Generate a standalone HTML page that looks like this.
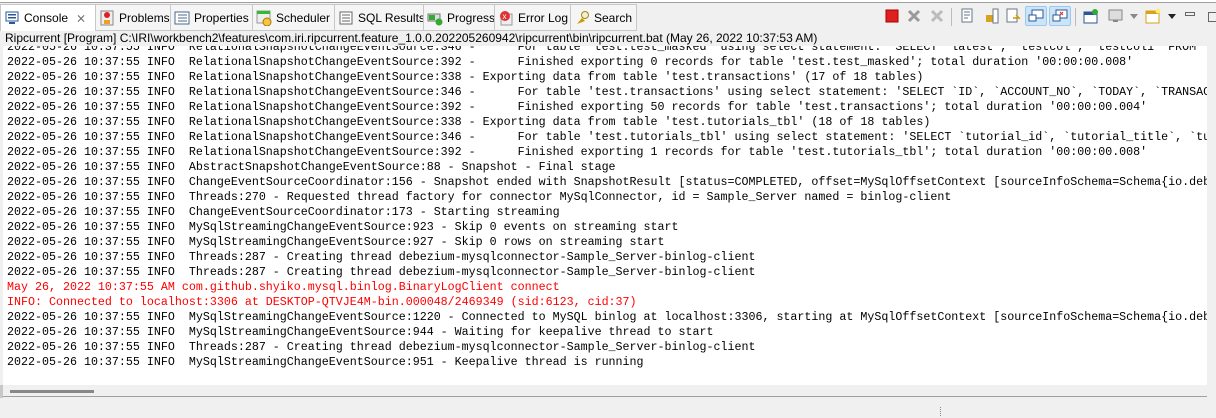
<!DOCTYPE html>
<html><head><meta charset="utf-8"><style>
*{margin:0;padding:0;box-sizing:border-box}
body{width:1216px;height:418px;background:#f0f0f0;position:relative;overflow:hidden;font-family:"Liberation Sans",sans-serif}
.top{position:absolute;left:0;top:0;width:1216px;height:3px;background:#fff;border-bottom:1px solid #a0a0a0}
.tabs{position:absolute;left:0;top:4px;height:27px;display:flex}
.tab{height:27px;border:1px solid #c8c8c8;border-left:none;background:#f5f5f5;font-size:12px;display:flex;align-items:center;padding:0 0 0 3px;color:#000;white-space:nowrap;overflow:hidden}
.tab.act{background:#fff;border-left:1px solid #c8c8c8;border-bottom:none}
.ic{width:16px;height:16px;margin-right:4px;display:inline-block;position:relative;flex:none}
.title{position:absolute;left:0;top:31px;width:1216px;height:15px;font-size:12px;line-height:15px;padding-left:5px;background:#f0f0f0;white-space:nowrap}
.con{position:absolute;left:3px;top:46px;width:1204px;height:339px;background:#fff;overflow:hidden}
pre{font-family:"Liberation Mono",monospace;font-size:11.67px;line-height:15px;position:absolute;left:4px;top:-6px;color:#000;white-space:pre}
.r{color:#ff0000}
.vs{position:absolute;left:1207px;top:46px;width:9px;height:339px;background:#f0f0f0}
.hs{position:absolute;left:3px;top:385px;width:1204px;height:12px;background:#f0f0f0;border-bottom:1px solid #a0a0a0}
.thumb{position:absolute;left:7px;top:5px;width:84px;height:3px;background:#888}
.tb{position:absolute;top:8px;width:16px;height:16px}
</style></head><body>
<div class="top"></div>
<div class="tabs">
<div class="tab act" style="width:96px"><span class="ic"><svg width="16" height="16"><rect x="2" y="2" width="12" height="9" fill="#fff" stroke="#2b5797"/><rect x="4" y="4" width="8" height="1.5" fill="#2b5797"/><rect x="4" y="7" width="8" height="1.5" fill="#2b5797"/><rect x="5" y="12" width="6" height="2" fill="#2b5797"/></svg></span>Console <span style="margin-left:8px;color:#666;font-size:12px">⨯</span></div>
<div class="tab" style="width:75px"><span class="ic"><svg width="16" height="16"><rect x="2" y="1" width="12" height="14" fill="#eee" stroke="#888"/><circle cx="8" cy="5" r="3" fill="#d22"/><rect x="5" y="10" width="6" height="4" fill="#f0a020"/></svg></span>Problems</div>
<div class="tab" style="width:82px"><span class="ic"><svg width="16" height="16"><rect x="1" y="2" width="14" height="12" fill="#fff" stroke="#4a6a8a"/><line x1="4" y1="5" x2="13" y2="5" stroke="#4a6a8a"/><line x1="4" y1="8" x2="13" y2="8" stroke="#4a6a8a"/><line x1="4" y1="11" x2="13" y2="11" stroke="#4a6a8a"/></svg></span>Properties</div>
<div class="tab" style="width:82px"><span class="ic"><svg width="16" height="16"><rect x="1" y="1" width="13" height="12" fill="#eee" stroke="#999"/><rect x="1" y="1" width="13" height="3" fill="#3b3"/><circle cx="11" cy="12" r="4" fill="#f5c542" stroke="#a70"/></svg></span>Scheduler</div>
<div class="tab" style="width:89px"><span class="ic"><svg width="16" height="16"><rect x="2" y="2" width="12" height="12" fill="#fff" stroke="#666"/><line x1="4" y1="5" x2="12" y2="5" stroke="#666"/><line x1="4" y1="8" x2="12" y2="8" stroke="#666"/><line x1="4" y1="11" x2="12" y2="11" stroke="#666"/></svg></span>SQL Results</div>
<div class="tab" style="width:71px"><span class="ic"><svg width="16" height="16"><rect x="1" y="4" width="12" height="7" fill="#ddd" stroke="#777"/><rect x="2" y="5" width="6" height="5" fill="#3a3"/><circle cx="12" cy="12" r="3.5" fill="#3a3"/></svg></span>Progress</div>
<div class="tab" style="width:76px"><span class="ic"><svg width="16" height="16"><rect x="3" y="4" width="11" height="11" fill="#eee" stroke="#999"/><circle cx="7" cy="6" r="5" fill="#d33"/><text x="4.5" y="9" font-size="8" fill="#fff">x</text></svg></span>Error Log</div>
<div class="tab" style="width:66px"><span class="ic"><svg width="16" height="16"><path d="M3 14 L8 8 L11 11 Z" fill="#c90"/><circle cx="11" cy="5" r="3.5" fill="#eed" stroke="#a80"/></svg></span>Search</div>
</div>
<svg class="tb" style="left:884px" viewBox="0 0 16 16"><rect x="2" y="2" width="12" height="12" fill="#e02020" stroke="#a00"/></svg>
<svg class="tb" style="left:906px" viewBox="0 0 16 16"><path d="M3 3L13 13M13 3L3 13" stroke="#999" stroke-width="3"/></svg>
<svg class="tb" style="left:929px" viewBox="0 0 16 16"><path d="M3 3L13 13M13 3L3 13" stroke="#bbb" stroke-width="3"/></svg>
<div style="position:absolute;left:951px;top:8px;width:1px;height:18px;background:#bbb"></div>
<svg class="tb" style="left:960px" viewBox="0 0 16 16"><rect x="2" y="1" width="10" height="13" fill="#fff" stroke="#678"/><path d="M4 4h6M4 7h6M4 10h4" stroke="#678"/></svg>
<svg class="tb" style="left:983px" viewBox="0 0 16 16"><rect x="3" y="7" width="8" height="7" fill="#d9a21a"/><rect x="10" y="1" width="5" height="14" fill="#fff" stroke="#678"/></svg>
<svg class="tb" style="left:1005px" viewBox="0 0 16 16"><rect x="2" y="1" width="10" height="13" fill="#fff" stroke="#678"/><path d="M8 10h6l-3-3" stroke="#c90" fill="none" stroke-width="1.5"/></svg>
<div style="position:absolute;left:1025px;top:6px;width:22px;height:20px;background:#cce4f7;border:1px solid #99c9ef;border-radius:2px"></div>
<svg class="tb" style="left:1028px" viewBox="0 0 16 16"><rect x="4" y="2" width="11" height="8" fill="#fff" stroke="#2b5797"/><rect x="1" y="7" width="7" height="6" fill="#fff" stroke="#2b5797"/></svg>
<div style="position:absolute;left:1049px;top:6px;width:22px;height:20px;background:#cce4f7;border:1px solid #99c9ef;border-radius:2px"></div>
<svg class="tb" style="left:1052px" viewBox="0 0 16 16"><rect x="4" y="2" width="11" height="8" fill="#fff" stroke="#2b5797"/><path d="M8 4l3 3M11 4l-3 3" stroke="#d22"/><rect x="1" y="7" width="7" height="6" fill="#fff" stroke="#2b5797"/></svg>
<div style="position:absolute;left:1075px;top:8px;width:1px;height:18px;background:#bbb"></div>
<svg class="tb" style="left:1083px" viewBox="0 0 16 16"><rect x="1" y="4" width="13" height="11" fill="#fff" stroke="#2b5797"/><rect x="1" y="4" width="13" height="3" fill="#2b5797"/><circle cx="12" cy="4" r="3" fill="#3a3"/></svg>
<svg class="tb" style="left:1108px" viewBox="0 0 16 16"><rect x="1" y="2" width="13" height="10" fill="#ddd" stroke="#888"/><rect x="5" y="12" width="5" height="2" fill="#888"/></svg>
<div style="position:absolute;left:1130px;top:14px;border:4px solid transparent;border-top:5px solid #888"></div>
<svg class="tb" style="left:1145px" viewBox="0 0 16 16"><rect x="1" y="3" width="13" height="12" fill="#fff" stroke="#d9a21a"/><rect x="1" y="3" width="13" height="3" fill="#d9a21a"/><circle cx="13" cy="3" r="2.5" fill="#fe6"/></svg>
<div style="position:absolute;left:1168px;top:14px;border:4px solid transparent;border-top:5px solid #222"></div>
<div style="position:absolute;left:1185px;top:12px;width:10px;height:4px;border:1px solid #666"></div>
<div style="position:absolute;left:1208px;top:12px;width:10px;height:10px;border:1px solid #666"></div>
<div class="title">Ripcurrent [Program] C:\IRI\workbench2\features\com.iri.ripcurrent.feature_1.0.0.202205260942\ripcurrent\bin\ripcurrent.bat (May 26, 2022 10:37:53 AM)</div>
<div class="con"><pre>2022-05-26 10:37:55 INFO  RelationalSnapshotChangeEventSource:346 -      For table 'test.test_masked' using select statement: 'SELECT `latest`, `testcol`, `testcol1` FROM
2022-05-26 10:37:55 INFO  RelationalSnapshotChangeEventSource:392 -      Finished exporting 0 records for table 'test.test_masked'; total duration '00:00:00.008'
2022-05-26 10:37:55 INFO  RelationalSnapshotChangeEventSource:338 - Exporting data from table 'test.transactions' (17 of 18 tables)
2022-05-26 10:37:55 INFO  RelationalSnapshotChangeEventSource:346 -      For table 'test.transactions' using select statement: 'SELECT `ID`, `ACCOUNT_NO`, `TODAY`, `TRANSAC
2022-05-26 10:37:55 INFO  RelationalSnapshotChangeEventSource:392 -      Finished exporting 50 records for table 'test.transactions'; total duration '00:00:00.004'
2022-05-26 10:37:55 INFO  RelationalSnapshotChangeEventSource:338 - Exporting data from table 'test.tutorials_tbl' (18 of 18 tables)
2022-05-26 10:37:55 INFO  RelationalSnapshotChangeEventSource:346 -      For table 'test.tutorials_tbl' using select statement: 'SELECT `tutorial_id`, `tutorial_title`, `tu
2022-05-26 10:37:55 INFO  RelationalSnapshotChangeEventSource:392 -      Finished exporting 1 records for table 'test.tutorials_tbl'; total duration '00:00:00.008'
2022-05-26 10:37:55 INFO  AbstractSnapshotChangeEventSource:88 - Snapshot - Final stage
2022-05-26 10:37:55 INFO  ChangeEventSourceCoordinator:156 - Snapshot ended with SnapshotResult [status=COMPLETED, offset=MySqlOffsetContext [sourceInfoSchema=Schema{io.deb
2022-05-26 10:37:55 INFO  Threads:270 - Requested thread factory for connector MySqlConnector, id = Sample_Server named = binlog-client
2022-05-26 10:37:55 INFO  ChangeEventSourceCoordinator:173 - Starting streaming
2022-05-26 10:37:55 INFO  MySqlStreamingChangeEventSource:923 - Skip 0 events on streaming start
2022-05-26 10:37:55 INFO  MySqlStreamingChangeEventSource:927 - Skip 0 rows on streaming start
2022-05-26 10:37:55 INFO  Threads:287 - Creating thread debezium-mysqlconnector-Sample_Server-binlog-client
2022-05-26 10:37:55 INFO  Threads:287 - Creating thread debezium-mysqlconnector-Sample_Server-binlog-client
<span class="r">May 26, 2022 10:37:55 AM com.github.shyiko.mysql.binlog.BinaryLogClient connect
INFO: Connected to localhost:3306 at DESKTOP-QTVJE4M-bin.000048/2469349 (sid:6123, cid:37)</span>
2022-05-26 10:37:55 INFO  MySqlStreamingChangeEventSource:1220 - Connected to MySQL binlog at localhost:3306, starting at MySqlOffsetContext [sourceInfoSchema=Schema{io.deb
2022-05-26 10:37:55 INFO  MySqlStreamingChangeEventSource:944 - Waiting for keepalive thread to start
2022-05-26 10:37:55 INFO  Threads:287 - Creating thread debezium-mysqlconnector-Sample_Server-binlog-client
2022-05-26 10:37:55 INFO  MySqlStreamingChangeEventSource:951 - Keepalive thread is running</pre></div>
<div class="vs"></div>
<div class="hs"><div class="thumb"></div></div>
<div style="position:absolute;left:0;top:385px;width:3px;height:13px;background:#a0a0a0;opacity:.5"></div>
<div style="position:absolute;left:940px;top:407px;width:1px;height:9px;border-left:1px dotted #888"></div>
</body></html>
